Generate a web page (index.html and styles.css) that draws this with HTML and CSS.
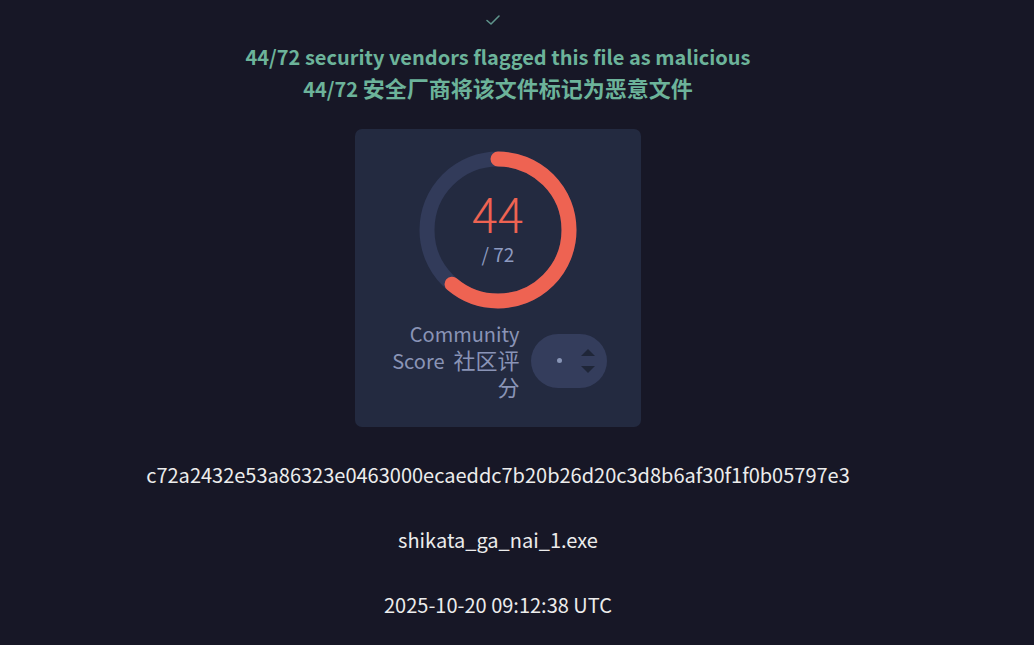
FILE: index.html
```html
<!DOCTYPE html>
<html lang="zh-CN">
<head>
    <meta charset="utf-8" />
    <title>文件检测结果</title>
    <link rel="stylesheet" href="styles.css">
</head>
<body>
    <div class="page">
        <div class="check">
            <svg width="16" height="12" viewBox="0 0 16 12">
                <path d="M2 6.5 L6 10 L14 2" fill="none" stroke="#5f948c" stroke-width="1.6" stroke-linecap="round" stroke-linejoin="round"/>
            </svg>
        </div>

        <h1 class="verdict">
            44/72 security vendors flagged this file as malicious<br>
            44/72 <span class="cjk">安全厂商将该文件标记为恶意文件</span>
        </h1>

        <div class="score-card">
            <div class="ring">
                <svg width="160" height="160" viewBox="0 0 160 160">
                    <circle cx="80" cy="80" r="71" fill="none" stroke="#323b5a" stroke-width="15"/>
                    <circle cx="80" cy="80" r="71" fill="none" stroke="#ee6352" stroke-width="15"
                            stroke-linecap="round" stroke-dasharray="272.6 446.1"
                            transform="rotate(-90 80 80)"/>
                </svg>
                <div class="ring-text">
                    <div class="positives">44</div>
                    <div class="total">/ 72</div>
                </div>
            </div>

            <div class="community">
                <div class="community-label">Community Score&nbsp; <span class="cjk">社区评分</span></div>
                <div class="stepper">
                    <span class="dot"></span>
                    <svg width="16" height="28" viewBox="0 0 16 28">
                        <path d="M1 9 L8 2 L15 9 Z" fill="#1f2638"/>
                        <path d="M1 19 L8 26 L15 19 Z" fill="#1f2638"/>
                    </svg>
                </div>
            </div>
        </div>

        <p class="info hash">c72a2432e53a86323e0463000ecaeddc7b20b26d20c3d8b6af30f1f0b05797e3</p>
        <p class="info name">shikata_ga_nai_1.exe</p>
        <p class="info date">2025-10-20 09:12:38 UTC</p>
    </div>
</body>
</html>
```

FILE: styles.css
```css
body {
    margin: 0;
    background-color: #171726;
    color: #ececec;
    font-family: "Noto Sans CJK SC", "Noto Sans", sans-serif;
}

.page {
    display: flex;
    flex-direction: column;
    align-items: center;
    padding-right: 38px;
}

.cjk {
    font-size: 1.1em;
    line-height: 1;
}

.check {
    margin-top: 7px;
    height: 12px;
    margin-left: -10px;
}

.verdict {
    margin: 22px 0 0;
    font-size: 20px;
    line-height: 32px;
    font-weight: bold;
    color: #6cb39a;
    text-align: center;
}

.score-card {
    margin-top: 24px;
    width: 286px;
    height: 298px;
    box-sizing: border-box;
    padding-top: 21px;
    background-color: #232a40;
    border-radius: 7px;
    display: flex;
    flex-direction: column;
    align-items: center;
}

.ring {
    position: relative;
    width: 160px;
    height: 160px;
}

.ring-text {
    position: absolute;
    inset: 0;
    display: flex;
    flex-direction: column;
    align-items: center;
    justify-content: center;
}

.positives {
    font-size: 48px;
    font-weight: 300;
    line-height: 50px;
    color: #ee6352;
    margin-top: -6px;
}

.total {
    font-size: 19px;
    line-height: 26px;
    color: #8e9bc0;
    margin-top: 4px;
}

.community {
    margin-top: 10px;
    display: flex;
    align-items: center;
    gap: 11px;
}

.community-label {
    width: 130px;
    text-align: right;
    font-size: 20px;
    line-height: 27px;
    color: #8a94b6;
}

.stepper {
    width: 76px;
    height: 54px;
    border-radius: 27px;
    background-color: #343d5c;
    display: flex;
    align-items: center;
    padding-left: 26px;
    box-sizing: border-box;
    gap: 18px;
}

.dot {
    width: 5px;
    height: 5px;
    border-radius: 50%;
    background-color: #8895b6;
}

.info {
    margin: 0;
    font-size: 20px;
    line-height: 28px;
}

.hash {
    margin-top: 34px;
}

.name {
    margin-top: 37px;
}

.date {
    margin-top: 37px;
}
```
